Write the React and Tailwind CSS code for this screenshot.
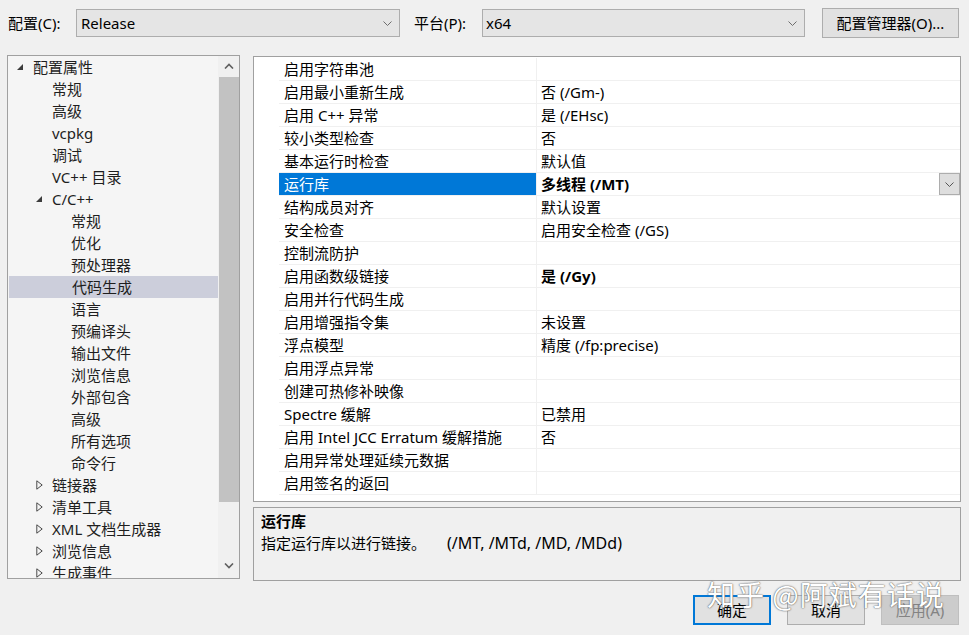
import React from "react";

function Chevron({ color = "#6d6d6d", w = 9, h = 5, sw = 1 }) {
  return (
    <svg width={w} height={h} viewBox={`0 0 ${w} ${h}`}>
      <polyline
        points={`0.5,0.5 ${w / 2},${h - 0.5} ${w - 0.5},0.5`}
        fill="none"
        stroke={color}
        strokeWidth={sw}
      />
    </svg>
  );
}

function ChevronUp() {
  return (
    <svg width="10" height="6" viewBox="0 0 10 6">
      <polyline points="1,5.5 5,1.5 9,5.5" fill="none" stroke="#606060" strokeWidth="1.6" />
    </svg>
  );
}

function ChevronDown() {
  return (
    <svg width="10" height="6" viewBox="0 0 10 6">
      <polyline points="1,0.5 5,4.5 9,0.5" fill="none" stroke="#606060" strokeWidth="1.6" />
    </svg>
  );
}

function OpenTri() {
  return (
    <svg width="6" height="6" viewBox="0 0 6 6">
      <polygon points="6,0 6,6 0,6" fill="#3c3c3c" />
    </svg>
  );
}

function ClosedTri() {
  return (
    <svg width="7" height="10" viewBox="0 0 7 10">
      <polygon points="0.8,0.8 6.2,5 0.8,9.2" fill="none" stroke="#4a4a4a" strokeWidth="1" />
    </svg>
  );
}

const tree = [
  { t: "配置属性", l: 0, tri: "open" },
  { t: "常规", l: 1 },
  { t: "高级", l: 1 },
  { t: "vcpkg", l: 1 },
  { t: "调试", l: 1 },
  { t: "VC++ 目录", l: 1 },
  { t: "C/C++", l: 1, tri: "open" },
  { t: "常规", l: 2 },
  { t: "优化", l: 2 },
  { t: "预处理器", l: 2 },
  { t: "代码生成", l: 2, sel: true },
  { t: "语言", l: 2 },
  { t: "预编译头", l: 2 },
  { t: "输出文件", l: 2 },
  { t: "浏览信息", l: 2 },
  { t: "外部包含", l: 2 },
  { t: "高级", l: 2 },
  { t: "所有选项", l: 2 },
  { t: "命令行", l: 2 },
  { t: "链接器", l: 1, tri: "closed" },
  { t: "清单工具", l: 1, tri: "closed" },
  { t: "XML 文档生成器", l: 1, tri: "closed" },
  { t: "浏览信息", l: 1, tri: "closed" },
  { t: "生成事件", l: 1, tri: "closed" },
];

const indent = ["pl-0", "pl-[19px]", "pl-[38px]"];

const props = [
  { n: "启用字符串池", v: "" },
  { n: "启用最小重新生成", v: "否 (/Gm-)" },
  { n: "启用 C++ 异常", v: "是 (/EHsc)" },
  { n: "较小类型检查", v: "否" },
  { n: "基本运行时检查", v: "默认值" },
  { n: "运行库", v: "多线程 (/MT)", b: true, sel: true },
  { n: "结构成员对齐", v: "默认设置" },
  { n: "安全检查", v: "启用安全检查 (/GS)" },
  { n: "控制流防护", v: "" },
  { n: "启用函数级链接", v: "是 (/Gy)", b: true },
  { n: "启用并行代码生成", v: "" },
  { n: "启用增强指令集", v: "未设置" },
  { n: "浮点模型", v: "精度 (/fp:precise)" },
  { n: "启用浮点异常", v: "" },
  { n: "创建可热修补映像", v: "" },
  { n: "Spectre 缓解", v: "已禁用" },
  { n: "启用 Intel JCC Erratum 缓解措施", v: "否" },
  { n: "启用异常处理延续元数据", v: "" },
  { n: "启用签名的返回", v: "" },
];

export default function App() {
  return (
    <div className="relative w-[969px] h-[635px] overflow-hidden bg-[#f0f0f0] text-[15px] text-black font-['Noto_Sans','Noto_Sans_CJK_SC',sans-serif]">
      {/* top bar */}
      <div className="flex items-center h-[30px] mt-[8px]">
        <div className="ml-[8px] w-[68px] whitespace-nowrap">配置(C):</div>
        <div className="w-[324px] h-[28px] bg-[#e5e5e5] border border-[#adadad] flex items-center pl-[4px] pr-[7px]">
          <span className="flex-1">Release</span>
          <Chevron />
        </div>
        <div className="ml-[14px] w-[68px] whitespace-nowrap">平台(P):</div>
        <div className="w-[323px] h-[28px] bg-[#e5e5e5] border border-[#adadad] flex items-center pl-[3px] pr-[7px]">
          <span className="flex-1">x64</span>
          <Chevron />
        </div>
        <div className="ml-[17px] w-[137px] h-[30px] bg-[#e1e1e1] border border-[#adadad] flex items-center justify-center whitespace-nowrap">
          配置管理器(O)...
        </div>
      </div>

      {/* main */}
      <div className="flex mt-[17px]">
        {/* tree */}
        <div className="ml-[7px] w-[233px] h-[524px] border border-[#a0a0a0] bg-[#f5f5f5] flex">
          <div className="flex-1 overflow-hidden text-[#1e1e1e]">
            {tree.map((it, i) => (
              <div
                key={i}
                className={`h-[22px] flex items-center whitespace-nowrap ${indent[it.l]} ${it.sel ? "bg-[#cccedb] ml-[1px]" : ""}`}
              >
                <span className={`w-[25px] h-full flex items-center ${it.sel ? "pl-[8px]" : "pl-[9px]"}`}>
                  {it.tri === "open" && <OpenTri />}
                  {it.tri === "closed" && <ClosedTri />}
                </span>
                <span>{it.t}</span>
              </div>
            ))}
          </div>
          <div className="w-[21px] flex flex-col bg-[#f0f0f0]">
            <div className="h-[20px] flex items-center justify-center">
              <ChevronUp />
            </div>
            <div className="h-[425px] mt-[1px] ml-[1px] bg-[#c2c2c2]" />
            <div className="flex-1" />
            <div className="h-[20px] flex items-center justify-center mb-[2px]">
              <ChevronDown />
            </div>
          </div>
        </div>

        {/* right */}
        <div className="ml-[13px] w-[708px] mt-[1px]">
          <div className="h-[446px] border border-[#a0a0a0] bg-white pt-[1px] overflow-hidden">
            {props.map((p, i) => (
              <div key={i} className="flex h-[23px] whitespace-nowrap">
                <div className="w-[25px]" />
                <div
                  className={`w-[258px] border-b border-r border-[#f0f0f0] flex items-center pl-[5px] ${p.sel ? "bg-[#0078d7] text-white" : ""}`}
                >
                  {p.n}
                </div>
                <div className={`flex-1 border-b border-[#f0f0f0] flex items-center pl-[4px] ${p.b ? "font-bold" : ""}`}>
                  <span className="flex-1">{p.v}</span>
                  {p.sel && (
                    <div className="w-[21px] h-[22px] bg-[#dedede] border border-[#adadad] flex items-center justify-center">
                      <Chevron color="#555" />
                    </div>
                  )}
                </div>
              </div>
            ))}
          </div>
          <div className="mt-[5px] h-[74px] border border-[#a0a0a0] px-[7px] pt-[2px] leading-[22px]">
            <div className="font-bold">运行库</div>
            <div className="flex items-baseline whitespace-nowrap">
              <span>指定运行库以进行链接。</span>
              <span className="ml-[21px] text-[16px]">(/MT, /MTd, /MD, /MDd)</span>
            </div>
          </div>
        </div>
      </div>

      {/* buttons */}
      <div className="flex justify-end gap-[16px] pr-[10px] mt-[14px]">
        <div className="w-[78px] h-[30px] border-2 border-[#0078d7] bg-[#e1e1e1] flex items-center justify-center">确定</div>
        <div className="w-[78px] h-[30px] border border-[#adadad] bg-[#e1e1e1] flex items-center justify-center">取消</div>
        <div className="w-[78px] h-[30px] border border-[#bfbfbf] bg-[#cccccc] text-[#838383] flex items-center justify-center">应用(A)</div>
      </div>

      {/* watermark */}
      <div className="absolute left-[707px] top-[577px] text-[28px] leading-[34px] tracking-[1px] text-white whitespace-nowrap font-['Noto_Sans_CJK_SC',sans-serif] [text-shadow:0_0_1px_#555,0_0_2px_#777]">
        知乎 @阿斌有话说
      </div>
    </div>
  );
}
